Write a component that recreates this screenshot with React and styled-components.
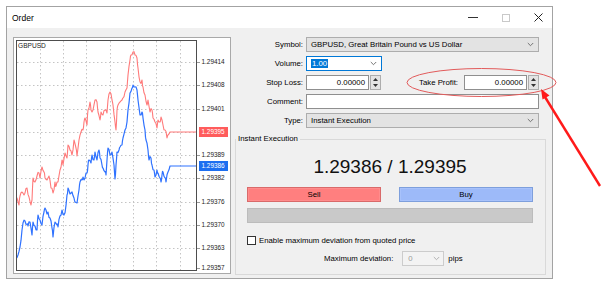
import React from 'react';
import styled, { createGlobalStyle } from 'styled-components';

const Global = createGlobalStyle`
  html, body { margin: 0; padding: 0; background: #fff; }
  body {
    font-family: "Liberation Sans", Arial, sans-serif;
    width: 602px; height: 287px; overflow: hidden;
    -webkit-font-smoothing: antialiased;
  }
  * { box-sizing: border-box; }
`;

const Page = styled.div`
  position: relative;
  width: 602px;
  height: 287px;
  padding: 6px 0 0 6px;
`;

const Window = styled.div`
  width: 547px;
  height: 273px;
  border: 1px solid #a3a3a3;
  background: #f0f0f0;
  display: flex;
  flex-direction: column;
`;

const TitleBar = styled.div`
  height: 21px;
  flex: none;
  background: #fff;
  display: flex;
  align-items: center;
  padding: 0 9px 0 5px;
  font-size: 8.5px;
  color: #000;
`;

const WinControls = styled.div`
  margin-left: auto;
  display: flex;
  align-items: center;
  gap: 24px;
`;

const MinGlyph = styled.span`
  width: 10px;
  height: 1px;
  background: #333;
`;

const MaxGlyph = styled.span`
  width: 8px;
  height: 8px;
  border: 1px solid #c9c9c9;
`;

const Body = styled.div`
  flex: 1;
  display: flex;
  gap: 4px;
  padding: 9px 0 0 6px;
`;

const ChartPanel = styled.div`
  width: 218px;
  height: 237px;
  border: 1px solid #a9a9a9;
  background: #fff;
  flex: none;
  svg { display: block; }
`;

const RightPanel = styled.div`
  width: 311px;
  display: flex;
  flex-direction: column;
`;

const Form = styled.div`
  display: grid;
  grid-template-columns: 68px 233px;
  grid-auto-rows: 15px;
  column-gap: 3px;
  row-gap: 4px;
  align-items: center;
`;

const Label = styled.div`
  font-size: 7.8px;
  color: #000;
  text-align: right;
  white-space: nowrap;
`;

const Select = styled.div`
  height: 15px;
  width: ${p => p.$w || '100%'};
  display: flex;
  align-items: center;
  padding: 0 4px 0 4px;
  font-size: 7.8px;
  color: #000;
  background: ${p => (p.$white ? '#fff' : '#e3e3e3')};
  border: 1px solid ${p => (p.$focus ? '#0078d7' : '#adadad')};
  white-space: nowrap;
  overflow: hidden;
  svg { margin-left: auto; flex: none; }
`;

const Selected = styled.span`
  background: #0078d7;
  color: #fff;
  padding: 0 1px;
  line-height: 9px;
`;

const Row = styled.div`
  display: flex;
  align-items: center;
  justify-content: space-between;
  height: 15px;
`;

const Group = styled.div`
  display: flex;
  align-items: center;
  gap: 6px;
`;

const NumField = styled.div`
  display: flex;
  height: 15px;
  width: 75px;
  gap: 1px;
`;

const NumInput = styled.div`
  flex: 1;
  background: #fff;
  border: 1px solid #8f8f8f;
  font-size: 7.8px;
  text-align: right;
  padding: 0 3px;
  line-height: 13px;
`;

const Spinner = styled.div`
  width: 11px;
  border: 1px solid #adadad;
  background: #e3e3e3;
  display: flex;
  flex-direction: column;
  align-items: center;
  justify-content: space-evenly;
`;

const TextInput = styled.div`
  height: 15px;
  background: #fff;
  border: 1px solid #8f8f8f;
`;

const Fieldset = styled.fieldset`
  margin: 6px 0 0 0;
  padding: 0;
  border: 1px solid #d9d9d9;
  min-inline-size: 0;
  height: 141px;
  width: 311px;
`;

const Legend = styled.legend`
  font-size: 7.8px;
  color: #000;
  padding: 0 2px;
  margin-left: 0;
  line-height: 10px;
`;

const GroupInner = styled.div`
  padding: 0 12px 0 11px;
  display: flex;
  flex-direction: column;
`;

const Price = styled.div`
  margin-top: 11px;
  height: 24px;
  line-height: 24px;
  text-align: center;
  font-size: 19px;
  color: #111;
`;

const TradeRow = styled.div`
  margin-top: 8px;
  display: flex;
  justify-content: space-between;
`;

const TradeButton = styled.div`
  width: 134px;
  height: 15px;
  border: 1px solid ${p => (p.$kind === 'sell' ? '#d96a6a' : '#7e9fdc')};
  background: ${p => (p.$kind === 'sell' ? '#ff7f7f' : '#9dbaf9')};
  box-shadow: inset 0 0 0 1px ${p => (p.$kind === 'sell' ? '#ff8c8c' : '#a8c2fb')};
  font-size: 7.8px;
  display: flex;
  align-items: center;
  justify-content: center;
  color: #000;
`;

const Bar = styled.div`
  margin-top: 6px;
  height: 15px;
  background: #c9c9c9;
  border: 1px solid #bcbcbc;
`;

const CheckRow = styled.div`
  margin-top: 11px;
  display: flex;
  align-items: center;
  gap: 3px;
  font-size: 7.8px;
  height: 12px;
`;

const CheckBox = styled.span`
  width: 9px;
  height: 9px;
  border: 1px solid #333;
  background: #fff;
`;

const DevRow = styled.div`
  margin-top: 5px;
  margin-left: 77px;
  display: flex;
  align-items: center;
  height: 15px;
  font-size: 7.8px;
  color: #000;
`;

const DevInput = styled.div`
  margin-left: 9px;
  width: 42px;
  height: 15px;
  border: 1px solid #cccccc;
  background: #f3f3f3;
  display: flex;
  align-items: center;
  padding: 0 3px 0 5px;
  color: #9a9a9a;
  svg { margin-left: auto; }
`;

const Pips = styled.span`
  margin-left: 4px;
`;

const Overlay = styled.svg`
  position: absolute;
  left: 0;
  top: 0;
  pointer-events: none;
`;

const Chevron = ({ color = '#666' }) => (
  <svg width="7" height="5" viewBox="0 0 7 5">
    <path d="M0.8 1 L3.5 3.7 L6.2 1" fill="none" stroke={color} strokeWidth="0.9" />
  </svg>
);

const Spin = () => (
  <Spinner>
    <svg width="5" height="3" viewBox="0 0 5 3"><path d="M0 3 L2.5 0 L5 3 Z" fill="#333" /></svg>
    <svg width="5" height="3" viewBox="0 0 5 3"><path d="M0 0 L2.5 3 L5 0 Z" fill="#333" /></svg>
  </Spinner>
);

const blue = [
  [16,258],[18,255],[20,247],[22,230],[23,223],[25,221],[27,224],[28,226],[30,222],[32,235],[33,222],[35,226],[37,230],[38,215],[40,220],[42,225],[44,212],[45,208],[47,214],[48,212],[50,218],[52,228],[53,237],[55,222],[57,225],[58,227],[60,216],[62,210],[64,215],[65,213],[67,195],[68,188],[70,194],[72,192],[74,198],[75,202],[77,203],[79,190],[80,182],[82,180],[83,177],[85,178],[87,173],[88,165],[89,160],[91,163],[92,155],[94,160],[95,152],[97,160],[99,150],[100,158],[102,165],[103,168],[105,172],[106,175],[107,160],[108,148],[110,155],[112,152],[114,165],[115,179],[116,165],[117,152],[119,150],[120,147],[122,145],[123,138],[125,130],[127,122],[128,110],[130,93],[132,88],[133,85],[135,87],[137,90],[138,100],[140,115],[142,112],[143,118],[145,130],[146,140],[148,150],[149,160],[151,158],[152,165],[154,170],[155,177],[157,170],[158,173],[160,178],[161,182],[162,175],[163,172],[165,178],[166,182],[168,172],[170,166],[197,166],
];

const red = [
  [16,200],[17,198],[19,205],[20,196],[22,192],[24,195],[25,193],[27,188],[29,197],[31,205],[32,200],[33,178],[35,182],[37,176],[39,173],[40,178],[42,167],[44,172],[45,178],[47,180],[49,176],[51,188],[53,193],[55,182],[56,186],[58,182],[60,170],[62,160],[63,165],[65,153],[67,158],[68,145],[70,150],[72,155],[74,140],[76,148],[77,156],[79,140],[81,132],[83,130],[84,122],[85,118],[87,125],[88,110],[90,102],[91,110],[93,110],[95,100],[97,102],[98,112],[100,120],[101,112],[103,115],[105,110],[107,113],[108,100],[110,92],[112,100],[113,105],[115,122],[116,130],[117,110],[118,105],[120,102],[122,100],[123,98],[125,92],[127,88],[128,75],[130,60],[131,55],[133,52],[135,55],[137,58],[138,68],[140,82],[142,80],[143,87],[145,95],[147,105],[148,100],[150,112],[152,110],[153,118],[155,122],[157,128],[158,120],[160,122],[161,117],[163,125],[165,130],[167,138],[168,135],[170,132],[197,132],
];

// add a little tick noise between traced points
const jag = (pts, seed) => {
  let s = seed;
  const rnd = () => { s = (s * 9301 + 49297) % 233280; return s / 233280; };
  const out = [];
  for (let i = 0; i < pts.length - 1; i++) {
    const [x1, y1] = pts[i];
    const [x2, y2] = pts[i + 1];
    out.push([x1, y1]);
    if (x2 - x1 < 10) {
      out.push([(x1 + x2) / 2, (y1 + y2) / 2 + (rnd() - 0.5) * 5]);
    }
  }
  out.push(pts[pts.length - 1]);
  return out.map(p => p.join(',')).join(' ');
};

const gridY = [62, 85, 109, 132, 155, 178, 202, 225, 248];
const gridX = [40, 63, 86, 110, 133, 156, 180];
const axis = [
  ['1.29414', 62], ['1.29408', 85], ['1.29401', 109], ['1.29389', 155],
  ['1.29382', 178], ['1.29376', 202], ['1.29370', 225], ['1.29363', 248], ['1.29357', 268],
];

const Chart = () => (
  <svg width="216" height="235" viewBox="0 0 216 235">
    <defs>
      <clipPath id="plot"><rect x="17" y="41" width="179" height="229" /></clipPath>
    </defs>
    <g transform="translate(-14,-38)">
      <rect x="16.5" y="40.5" width="180" height="230" fill="#fff" stroke="#4d4d4d" />
      {gridY.map(y => (
        <line key={'h' + y} x1="17" x2="196" y1={y + 0.5} y2={y + 0.5} stroke="#c4c4c4" strokeDasharray="1.5 2.5" />
      ))}
      {gridX.map(x => (
        <line key={'v' + x} x1={x + 0.5} x2={x + 0.5} y1="41" y2="270" stroke="#c4c4c4" strokeDasharray="1.5 2.5" />
      ))}
      <text x="18" y="47.5" fontSize="6.6" fill="#222" fontFamily="Liberation Sans, Arial, sans-serif">GBPUSD</text>
      <g clipPath="url(#plot)">
        <polyline points={jag(red, 7)} fill="none" stroke="#ff7a7a" strokeWidth="1.1" strokeLinejoin="round" />
        <polyline points={jag(blue, 13)} fill="none" stroke="#2f72ff" strokeWidth="1.2" strokeLinejoin="round" />
      </g>
      {axis.map(([t, y]) => (
        <g key={t}>
          <line x1="197" x2="200" y1={y + 0.5} y2={y + 0.5} stroke="#555" strokeWidth="0.6" />
          <text x="201.5" y={y + 2.4} fontSize="6.4" fill="#222" fontFamily="Liberation Sans, Arial, sans-serif">{t}</text>
        </g>
      ))}
      <rect x="199" y="127" width="29" height="10" fill="#ff5c5c" />
      <text x="201.5" y="134.4" fontSize="6.4" fill="#fff" fontFamily="Liberation Sans, Arial, sans-serif">1.29395</text>
      <rect x="199" y="161" width="29" height="10" fill="#1d6ff0" />
      <text x="201.5" y="168.4" fontSize="6.4" fill="#fff" fontFamily="Liberation Sans, Arial, sans-serif">1.29386</text>
    </g>
  </svg>
);

export default function App() {
  return (
    <Page>
      <Global />
      <Window>
        <TitleBar>
          Order
          <WinControls>
            <MinGlyph />
            <MaxGlyph />
            <svg width="9" height="9" viewBox="0 0 9 9">
              <path d="M0.5 0.5 L8.5 8.5 M8.5 0.5 L0.5 8.5" stroke="#222" strokeWidth="1" />
            </svg>
          </WinControls>
        </TitleBar>
        <Body>
          <ChartPanel>
            <Chart />
          </ChartPanel>
          <RightPanel>
            <Form>
              <Label>Symbol:</Label>
              <Select>GBPUSD, Great Britain Pound vs US Dollar<Chevron /></Select>

              <Label>Volume:</Label>
              <Select $white $focus $w="76px"><Selected>1.00</Selected><Chevron /></Select>

              <Label>Stop Loss:</Label>
              <Row>
                <NumField><NumInput>0.00000</NumInput><Spin /></NumField>
                <Group>
                  <Label>Take Profit:</Label>
                  <NumField><NumInput>0.00000</NumInput><Spin /></NumField>
                </Group>
              </Row>

              <Label>Comment:</Label>
              <TextInput />

              <Label>Type:</Label>
              <Select>Instant Execution<Chevron /></Select>
            </Form>
            <Fieldset>
              <Legend>Instant Execution</Legend>
              <GroupInner>
                <Price>1.29386 / 1.29395</Price>
                <TradeRow>
                  <TradeButton $kind="sell">Sell</TradeButton>
                  <TradeButton $kind="buy">Buy</TradeButton>
                </TradeRow>
                <Bar />
                <CheckRow>
                  <CheckBox />
                  Enable maximum deviation from quoted price
                </CheckRow>
                <DevRow>
                  Maximum deviation:
                  <DevInput>0<Chevron color="#aaa" /></DevInput>
                  <Pips>pips</Pips>
                </DevRow>
              </GroupInner>
            </Fieldset>
          </RightPanel>
        </Body>
      </Window>
      <Overlay width="602" height="287" viewBox="0 0 602 287">
        <ellipse cx="481.5" cy="82.5" rx="74.5" ry="14" fill="none" stroke="#e25b5b" strokeWidth="1" />
        <line x1="600" y1="186" x2="545" y2="97" stroke="#ff1a1a" strokeWidth="2.4" />
        <path d="M541 89 L549.5 95.5 L542.5 99.5 Z" fill="#ff1a1a" />
      </Overlay>
    </Page>
  );
}
